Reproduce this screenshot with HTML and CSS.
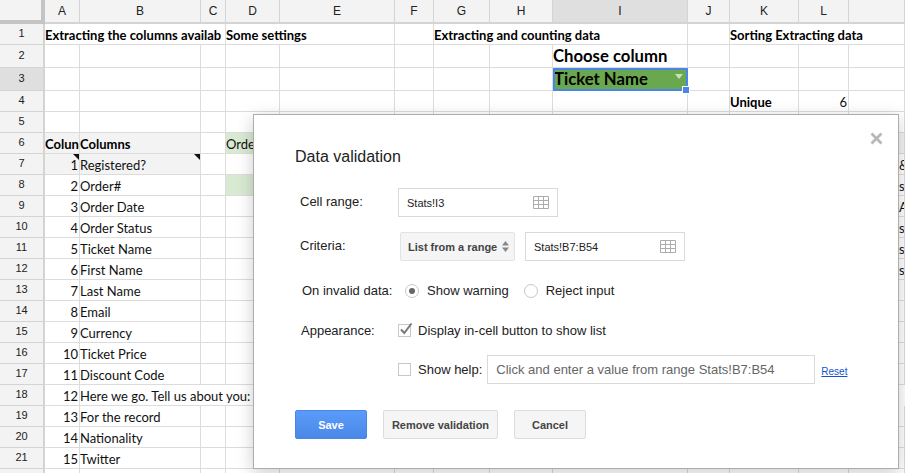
FILE: index.html
```html
<!DOCTYPE html>
<html lang="en">
  <head>
    <meta charset="UTF-8" />
    <title>Data validation</title>
    <link rel="stylesheet" href="styles.css">
  </head>

  <body>
    <!-- sheet behind the dialog -->
    <table class="sheet">
      <colgroup>
        <col class="c-head"><col class="c-a"><col class="c-b"><col class="c-c"><col class="c-d"><col class="c-e"><col class="c-f"><col class="c-g"><col class="c-h"><col class="c-i"><col class="c-j"><col class="c-k"><col class="c-l"><col class="c-m">
      </colgroup>
      <tr class="r-top">
        <th class="corner"></th><th>A</th><th>B</th><th>C</th><th>D</th><th>E</th><th>F</th><th>G</th><th>H</th><th class="picked">I</th><th>J</th><th>K</th><th>L</th><th></th>
      </tr>
      <tr class="r-1">
        <th>1</th><td colspan="3" class="b">Extracting the columns availab</td><td colspan="2" class="b">Some settings</td><td></td><td colspan="3" class="b">Extracting and counting data</td><td></td><td colspan="3" class="b">Sorting Extracting data</td>
      </tr>
      <tr class="r-2">
        <th>2</th><td></td><td></td><td></td><td></td><td></td><td></td><td></td><td></td><td class="big">Choose column</td><td></td><td></td><td></td><td></td>
      </tr>
      <tr class="r-2">
        <th class="picked">3</th><td></td><td></td><td></td><td></td><td></td><td></td><td></td><td></td><td class="big chosen">Ticket Name<span class="arrow"></span><span class="handle"></span></td><td></td><td></td><td></td><td></td>
      </tr>
      <tr>
        <th>4</th><td></td><td></td><td></td><td></td><td></td><td></td><td></td><td></td><td></td><td></td><td class="b">Unique</td><td class="num">6</td><td></td>
      </tr>
      <tr>
        <th>5</th><td></td><td></td><td></td><td></td><td></td><td></td><td></td><td></td><td></td><td></td><td></td><td></td><td></td>
      </tr>
      <tr>
        <th>6</th><td class="b grey">Colun</td><td class="b grey">Columns</td><td></td><td class="green">Order</td><td></td><td></td><td></td><td></td><td></td><td></td><td></td><td></td><td class="grey"></td>
      </tr>
      <tr>
        <th>7</th><td class="num grey note">1</td><td class="grey note">Registered?</td><td></td><td></td><td></td><td></td><td></td><td></td><td></td><td></td><td></td><td></td><td class="edge">&amp;</td>
      </tr>
      <tr>
        <th>8</th><td class="num">2</td><td>Order#</td><td></td><td class="green"></td><td></td><td></td><td></td><td></td><td></td><td></td><td></td><td></td><td class="edge">si</td>
      </tr>
      <tr>
        <th>9</th><td class="num">3</td><td>Order Date</td><td></td><td></td><td></td><td></td><td></td><td></td><td></td><td></td><td></td><td></td><td class="edge">A</td>
      </tr>
      <tr>
        <th>10</th><td class="num">4</td><td>Order Status</td><td></td><td></td><td></td><td></td><td></td><td></td><td></td><td></td><td></td><td></td><td class="edge">sa</td>
      </tr>
      <tr>
        <th>11</th><td class="num">5</td><td>Ticket Name</td><td></td><td></td><td></td><td></td><td></td><td></td><td></td><td></td><td></td><td></td><td class="edge">sa</td>
      </tr>
      <tr>
        <th>12</th><td class="num">6</td><td>First Name</td><td></td><td></td><td></td><td></td><td></td><td></td><td></td><td></td><td></td><td></td><td class="edge">sa</td>
      </tr>
      <tr>
        <th>13</th><td class="num">7</td><td>Last Name</td><td></td><td></td><td></td><td></td><td></td><td></td><td></td><td></td><td></td><td></td><td></td>
      </tr>
      <tr>
        <th>14</th><td class="num">8</td><td>Email</td><td></td><td></td><td></td><td></td><td></td><td></td><td></td><td></td><td></td><td></td><td></td>
      </tr>
      <tr>
        <th>15</th><td class="num">9</td><td>Currency</td><td></td><td></td><td></td><td></td><td></td><td></td><td></td><td></td><td></td><td></td><td></td>
      </tr>
      <tr>
        <th>16</th><td class="num">10</td><td>Ticket Price</td><td></td><td></td><td></td><td></td><td></td><td></td><td></td><td></td><td></td><td></td><td></td>
      </tr>
      <tr>
        <th>17</th><td class="num">11</td><td>Discount Code</td><td></td><td></td><td></td><td></td><td></td><td></td><td></td><td></td><td></td><td></td><td></td>
      </tr>
      <tr>
        <th>18</th><td class="num">12</td><td colspan="3">Here we go. Tell us about you:</td><td></td><td></td><td></td><td></td><td></td><td></td><td></td><td></td>
      </tr>
      <tr>
        <th>19</th><td class="num">13</td><td>For the record</td><td></td><td></td><td></td><td></td><td></td><td></td><td></td><td></td><td></td><td></td><td></td>
      </tr>
      <tr>
        <th>20</th><td class="num">14</td><td>Nationality</td><td></td><td></td><td></td><td></td><td></td><td></td><td></td><td></td><td></td><td></td><td></td>
      </tr>
      <tr>
        <th>21</th><td class="num">15</td><td>Twitter</td><td></td><td></td><td></td><td></td><td></td><td></td><td></td><td></td><td></td><td></td><td></td>
      </tr>
      <tr>
        <th></th><td></td><td></td><td></td><td></td><td></td><td></td><td></td><td></td><td></td><td></td><td></td><td></td><td></td>
      </tr>
    </table>

    <!-- dialog -->
    <div class="dialog">
      <svg class="close" width="13" height="13" viewBox="0 0 13 13"><path d="M1.5 1.5L11.5 11.5M11.5 1.5L1.5 11.5" stroke="#b8b8b8" stroke-width="2.8" fill="none"/></svg>
      <h2 class="title">Data validation</h2>

      <div class="row row-range">
        <div class="label">Cell range:</div>
        <div class="field field-range">Stats!I3
          <svg class="grid-icon" width="16" height="13" viewBox="0 0 16 13"><path d="M.5.5h15v12H.5zM.5 4.5h15M.5 8.5h15M5.5.5v12M10.5.5v12" stroke="#acacac" fill="none"/></svg>
        </div>
      </div>

      <div class="row row-criteria">
        <div class="label">Criteria:</div>
        <div class="select">List from a range
          <svg width="7" height="11" viewBox="0 0 7 11"><path d="M3.5 0L7 4.4H0zM3.5 11L0 6.6h7z" fill="#888"/></svg>
        </div>
        <div class="field field-criteria">Stats!B7:B54
          <svg class="grid-icon" width="16" height="13" viewBox="0 0 16 13"><path d="M.5.5h15v12H.5zM.5 4.5h15M.5 8.5h15M5.5.5v12M10.5.5v12" stroke="#acacac" fill="none"/></svg>
        </div>
      </div>

      <div class="row row-invalid">
        <div class="label label-invalid">On invalid data:</div>
        <span class="radio on"></span><span class="opt opt-warn">Show warning</span>
        <span class="radio"></span><span class="opt">Reject input</span>
      </div>

      <div class="row row-look">
        <div class="label label-look">Appearance:</div>
        <span class="check">
          <svg width="15" height="15" viewBox="0 0 15 15"><path d="M3 7.5L6.3 11L13.5 1.5" stroke="#777" stroke-width="2" fill="none"/></svg>
        </span>
        <span class="opt">Display in-cell button to show list</span>
      </div>

      <div class="row row-help">
        <span class="check"></span>
        <span class="opt opt-help">Show help:</span>
        <div class="help-input">Click and enter a value from range Stats!B7:B54</div>
        <a class="reset" href="#">Reset</a>
      </div>

      <div class="buttons">
        <button class="btn save">Save</button>
        <button class="btn remove">Remove validation</button>
        <button class="btn cancel">Cancel</button>
      </div>
    </div>
  </body>
</html>
```

FILE: styles.css
```css
* {
    box-sizing: border-box;
    margin: 0;
    padding: 0;
}
html, body {
    height: 100%;
    overflow: hidden;
    background-color: white;
}

/* sheet */
.sheet {
    table-layout: fixed;
    border-collapse: separate;
    border-spacing: 0;
    width: 905px;
    font-family: "Lato", "Liberation Sans", sans-serif;
    font-size: 13px;
    color: #111;
}
.c-head { width: 45px; }
.c-a { width: 35px; }
.c-b { width: 121px; }
.c-c { width: 25px; }
.c-d { width: 54px; }
.c-e { width: 115px; }
.c-f { width: 39px; }
.c-g { width: 56px; }
.c-h { width: 63px; }
.c-i { width: 135px; }
.c-j { width: 42px; }
.c-k { width: 69px; }
.c-l { width: 50px; }
.c-m { width: 56px; }

.sheet tr { height: 21px; }
.sheet .r-top { height: 24px; }
.sheet .r-1 { height: 21px; }
.sheet .r-2 { height: 23px; }

.sheet th {
    background-color: #f3f3f3;
    border-right: 1px solid #d4d4d4;
    border-bottom: 1px solid #d4d4d4;
    font-family: "Liberation Sans", Arial, sans-serif;
    font-weight: normal;
    font-size: 11px;
    color: #222;
    text-align: center;
    padding-bottom: 2px;
}
.sheet .r-top th {
    font-size: 12px;
    padding-bottom: 0;
    border-bottom: 2px solid #d4d4d4;
}
.sheet tr > th:first-child {
    border-right: 2px solid #d4d4d4;
}
.sheet .corner {
    border-right: 4px solid #c4c4c4 !important;
    border-bottom: 4px solid #c4c4c4 !important;
}
.sheet th.picked {
    background-color: #dfdfdf;
}
.sheet td {
    border-right: 1px solid #dcdcdc;
    border-bottom: 1px solid #dcdcdc;
    padding: 1px 1px 0 0;
    white-space: nowrap;
    overflow: hidden;
    position: relative;
}
.b {
    font-weight: bold;
    color: #000;
}
.num {
    text-align: right;
}
.grey {
    background-color: #f3f3f3;
}
.green {
    background-color: #d9ead3;
}
.sheet .big {
    font-size: 16.7px;
    font-weight: bold;
    color: #000;
    padding-top: 0;
    padding-bottom: 1px;
}
.sheet td.chosen {
    background-color: #6aa84f;
    outline: 2px solid #4a86e8;
    outline-offset: -2px;
    overflow: visible;
    padding: 0 0 0 1px;
}
.arrow {
    position: absolute;
    right: 4px;
    top: 6px;
    border-left: 4px solid transparent;
    border-right: 4px solid transparent;
    border-top: 5px solid #c9dfc0;
}
.handle {
    position: absolute;
    right: -3px;
    bottom: -4px;
    width: 8px;
    height: 8px;
    background-color: #4a86e8;
    border: 1px solid white;
    z-index: 2;
}
.note::after { /* black corner of a noted cell */
    content: "";
    position: absolute;
    top: 0;
    right: 0;
    border-top: 6px solid #111;
    border-left: 6px solid transparent;
}
.sheet .edge { /* only the tail of this column shows right of the dialog */
    padding-left: 50px;
}

/* dialog */
.dialog {
    position: absolute;
    left: 253px;
    top: 114px;
    width: 646px;
    height: 355px;
    background-color: white;
    border: 1px solid #acacac;
    box-shadow: 0 4px 16px rgba(0, 0, 0, 0.2);
    padding: 33px 0 0 41px;
    font-family: "Liberation Sans", Arial, sans-serif;
    font-size: 13px;
    color: #222;
}
.close {
    position: absolute;
    right: 15px;
    top: 17px;
}
.title {
    font-size: 16px;
    font-weight: normal;
    line-height: 18px;
    color: #222;
}
.row {
    display: flex;
    align-items: center;
}
.label {
    width: 103px;
    padding-left: 5px;
}
.row-range {
    margin-top: 22px;
    height: 29px;
}
.row-range .label {
    padding-bottom: 3px;
}
.row-criteria {
    margin-top: 15px;
    height: 29px;
}
.row-criteria .label {
    width: 105px;
    padding-bottom: 3px;
}
.field {
    display: flex;
    align-items: center;
    justify-content: space-between;
    width: 160px;
    height: 29px;
    border: 1px solid #d9d9d9;
    padding: 0 8px;
    font-size: 11px;
}
.select {
    display: flex;
    align-items: center;
    justify-content: space-between;
    width: 115px;
    height: 29px;
    background-color: #f5f5f5;
    border: 1px solid #e3e3e3;
    border-radius: 2px;
    padding: 0 5px 0 7px;
    margin-right: 10px;
    font-size: 11px;
    font-weight: bold;
    color: #444;
}
.row-invalid {
    margin-top: 15px;
    height: 29px;
}
.label-invalid {
    width: 110px;
    padding-left: 7px;
}
.radio {
    width: 14px;
    height: 14px;
    border: 1px solid #c8c8c8;
    border-radius: 50%;
    display: flex;
    justify-content: center;
    align-items: center;
    margin-right: 8px;
    flex-shrink: 0;
}
.radio.on::after {
    content: "";
    width: 6px;
    height: 6px;
    border-radius: 50%;
    background-color: #666;
}
.opt-warn {
    margin-right: 15px;
}
.row-look {
    margin-top: 11px;
    height: 29px;
}
.label-look {
    width: 103px;
    padding-left: 6px;
}
.check {
    width: 13px;
    height: 13px;
    border: 1px solid #c8c8c8;
    margin-right: 7px;
    position: relative;
    flex-shrink: 0;
}
.check svg {
    position: absolute;
    left: -1px;
    top: -3px;
}
.row-help {
    margin-top: 10px;
    height: 29px;
    padding-left: 103px;
}
.opt-help {
    margin-right: 5px;
}
.help-input {
    width: 328px;
    height: 29px;
    border: 1px solid #d9d9d9;
    padding: 0 8px;
    line-height: 27px;
    font-size: 13px;
    color: #666;
}
.reset {
    margin-left: 6px;
    margin-top: 3px;
    font-size: 10px;
    color: #1155cc;
}
.buttons {
    display: flex;
    gap: 16px;
    margin-top: 26px;
}
.btn {
    height: 29px;
    border: 1px solid #dcdcdc;
    border-radius: 2px;
    background-color: #f5f5f5;
    font-family: "Liberation Sans", Arial, sans-serif;
    font-size: 11px;
    font-weight: bold;
    color: #444;
}
.save {
    width: 72px;
    background: linear-gradient(#5a9bfb, #4a88e6);
    border-color: #4a86e8;
    color: white;
}
.remove {
    width: 115px;
}
.cancel {
    width: 72px;
}
```
